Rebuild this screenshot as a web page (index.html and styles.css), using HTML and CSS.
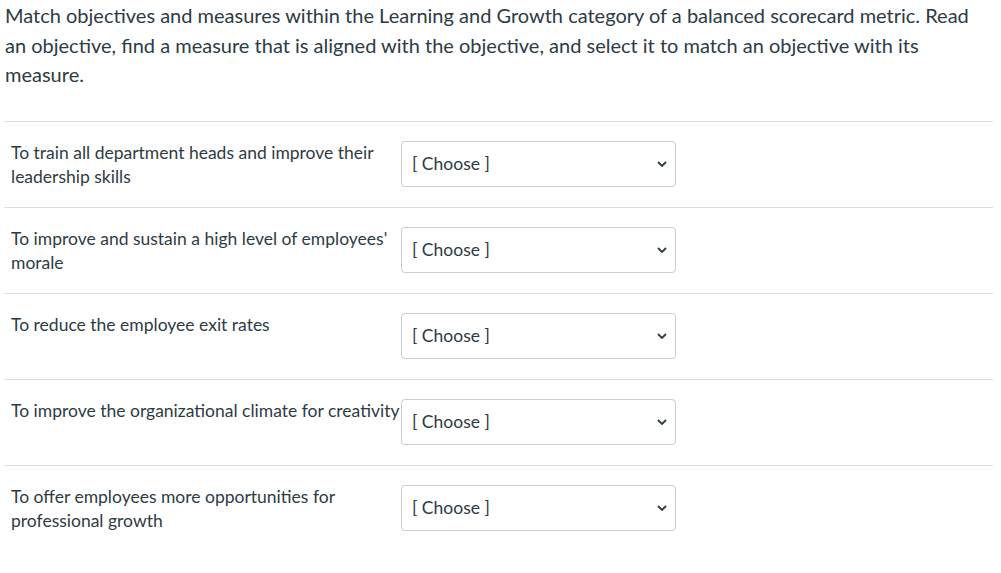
FILE: index.html
```html
<!DOCTYPE html>
<html>
<head>
<meta charset="utf-8">
<link rel="stylesheet" href="styles.css">
</head>
<body>
<div class="page">
  <p class="intro">Match objectives and measures within the Learning and Growth category of a balanced scorecard metric. Read an objective, find a measure that is aligned with the objective, and select it to match an objective with its measure.</p>
  <div class="rows">
    <div class="row">
      <div class="label">To train all department heads and improve their leadership skills</div>
      <div class="select"><span>[ Choose ]</span><svg class="chev" width="10" height="6" viewBox="0 0 10 6"><path d="M1 1 L5 5 L9 1" fill="none" stroke="#2d3b45" stroke-width="1.8"/></svg></div>
    </div>
    <div class="row">
      <div class="label">To improve and sustain a high level of employees' morale</div>
      <div class="select"><span>[ Choose ]</span><svg class="chev" width="10" height="6" viewBox="0 0 10 6"><path d="M1 1 L5 5 L9 1" fill="none" stroke="#2d3b45" stroke-width="1.8"/></svg></div>
    </div>
    <div class="row">
      <div class="label">To reduce the employee exit rates</div>
      <div class="select"><span>[ Choose ]</span><svg class="chev" width="10" height="6" viewBox="0 0 10 6"><path d="M1 1 L5 5 L9 1" fill="none" stroke="#2d3b45" stroke-width="1.8"/></svg></div>
    </div>
    <div class="row">
      <div class="label">To improve the organizational climate for creativity</div>
      <div class="select"><span>[ Choose ]</span><svg class="chev" width="10" height="6" viewBox="0 0 10 6"><path d="M1 1 L5 5 L9 1" fill="none" stroke="#2d3b45" stroke-width="1.8"/></svg></div>
    </div>
    <div class="row">
      <div class="label">To offer employees more opportunities for professional growth</div>
      <div class="select"><span>[ Choose ]</span><svg class="chev" width="10" height="6" viewBox="0 0 10 6"><path d="M1 1 L5 5 L9 1" fill="none" stroke="#2d3b45" stroke-width="1.8"/></svg></div>
    </div>
  </div>
</div>
</body>
</html>
```

FILE: styles.css
```css
html, body {
  margin: 0;
  padding: 0;
  background: #ffffff;
}
body {
  font-family: Lato, "Liberation Sans", sans-serif;
  color: #2d3b45;
}
.page {
  padding: 1px 8px 0 4px;
}
.intro {
  margin: 0 0 31px 1px;
  max-width: 975px;
  font-size: 20px;
  line-height: 29.5px;
}
.row {
  display: flex;
  align-items: flex-start;
  border-top: 1px solid #dcdfe2;
  padding: 19px 0 18px 7px;
}
.label {
  width: 390px;
  font-size: 17.5px;
  line-height: 24px;
}
.select {
  height: 44px;
  width: 255px;
  margin-bottom: 2px;
  border: 1px solid #c7cdd1;
  border-radius: 4px;
  display: flex;
  align-items: center;
  justify-content: space-between;
  padding: 0 8px 0 10px;
  font-size: 17.5px;
}
.chev {
  display: block;
}
```
